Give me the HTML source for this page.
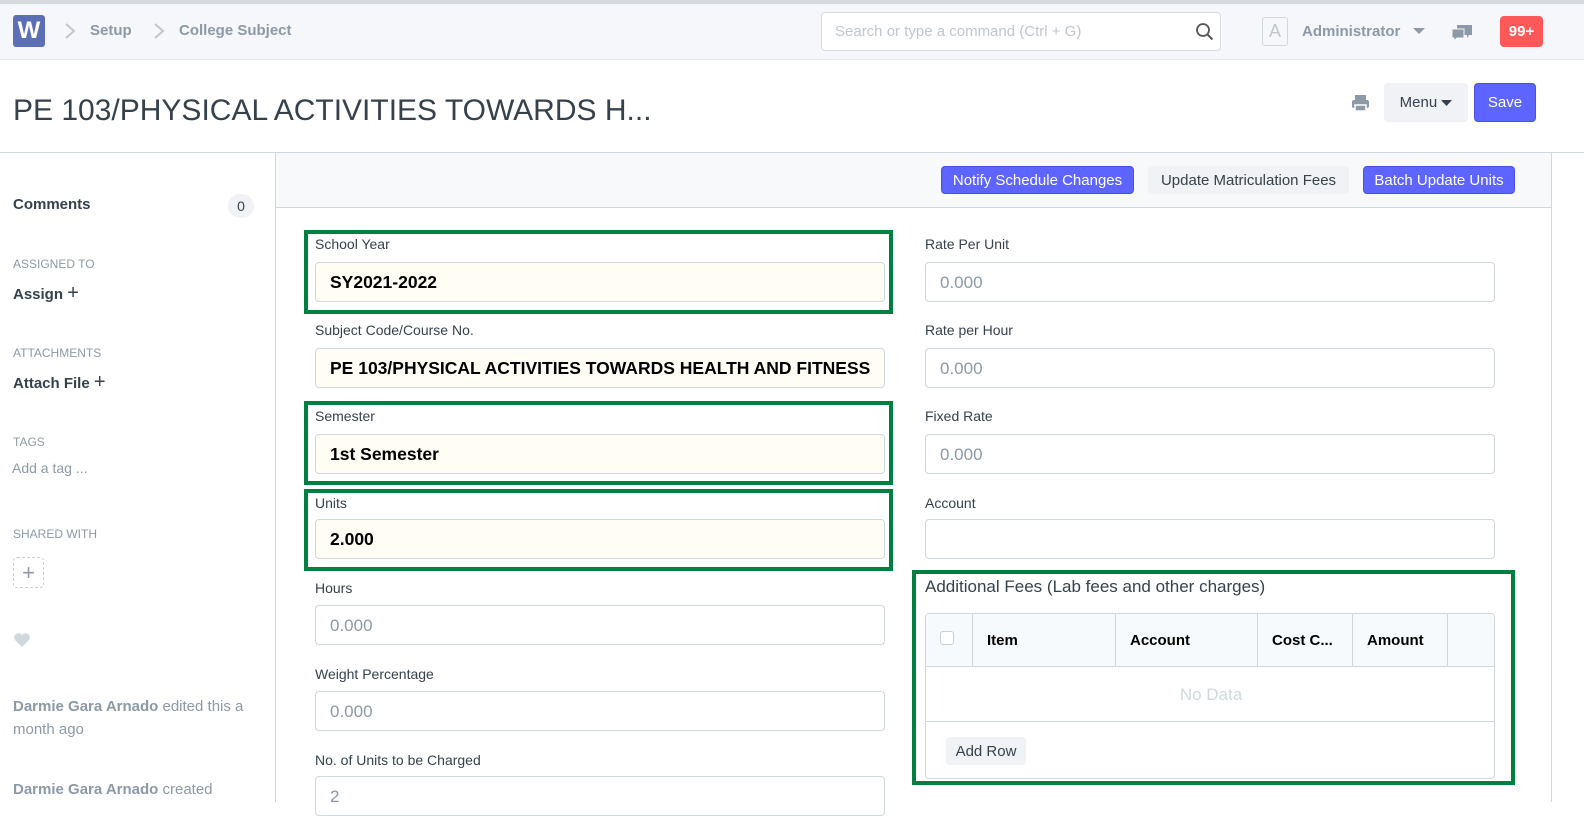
<!DOCTYPE html>
<html><head><meta charset="utf-8">
<style>
*{box-sizing:border-box;margin:0;padding:0}
body{width:1584px;height:802px;overflow:hidden;background:#fff;font-family:"Liberation Sans",sans-serif;color:#1f272e;position:relative}
.a{position:absolute}
.nav{left:0;top:0;width:1584px;height:60px;background:#f5f7fa;border-top:4px solid #d6d9dd;border-bottom:1px solid #e5e8eb}
.crumb{font-size:15px;font-weight:bold;color:#8d99a6}
.lbl{font-size:14px;color:#36414c}
.inp{height:40px;border:1px solid #d1d8dd;border-radius:4px;background:#fff;font-size:17px;color:#8d99a6;padding:10px 14px}
.inp.y{background:#fffdf4;color:#000;font-weight:bold;font-size:17.5px;padding:9px 14px;white-space:nowrap;overflow:hidden}
.gb{border:4px solid #008040}
.side{font-size:12px;color:#8d99a6}
.sb{font-size:15px;font-weight:bold;color:#36414c}
.btn{border-radius:4px;font-size:15px;display:flex;align-items:center;justify-content:center}
.th{font-size:15px;font-weight:bold;color:#000;display:flex;align-items:center;padding-left:14px;border-right:1px solid #d1d8dd;height:52px;top:0}
</style></head><body>
<div class="a nav"></div>
<div class="a" style="left:13px;top:15px;width:32px;height:32px;background:#5c6fb5;border-radius:3px;color:#fff;font-weight:bold;font-size:24px;text-align:center;line-height:32px">W</div>
<svg class="a" style="left:63px;top:22px" width="14" height="18"><path d="M3 2l8 7-8 7" fill="none" stroke="#c0c6cc" stroke-width="2"/></svg>
<div class="a crumb" style="left:90px;top:22px">Setup</div>
<svg class="a" style="left:152px;top:22px" width="14" height="18"><path d="M3 2l8 7-8 7" fill="none" stroke="#c0c6cc" stroke-width="2"/></svg>
<div class="a crumb" style="left:179px;top:22px">College Subject</div>
<div class="a" style="left:821px;top:12px;width:400px;height:39px;border:1px solid #d8dce0;border-radius:4px;background:#fff"></div>
<div class="a" style="left:835px;top:23px;font-size:15px;color:#c0c6cc">Search or type a command (Ctrl + G)</div>
<svg class="a" style="left:1195px;top:22px" width="20" height="20"><circle cx="8" cy="8" r="6" fill="none" stroke="#555" stroke-width="1.8"/><path d="M12.5 12.5l5 5" stroke="#555" stroke-width="2"/></svg>
<div class="a" style="left:1262px;top:17px;width:26px;height:29px;border:1px solid #d1d8dd;border-radius:3px;color:#c0c6cc;font-size:18px;text-align:center;line-height:27px">A</div>
<div class="a" style="left:1302px;top:23px;font-size:15px;font-weight:bold;color:#8d99a6">Administrator</div>
<svg class="a" style="left:1413px;top:28px" width="12" height="7"><path d="M0 0h12L6 6z" fill="#8d99a6"/></svg>
<svg class="a" style="left:1451px;top:23px" width="22" height="20"><path d="M6 2h15v10h-3l-2 3v-3H6z" fill="#8d99a6"/><path d="M1 6h12v9H6l-3 3v-3H1z" fill="#8d99a6" stroke="#f5f7fa" stroke-width="1"/></svg>
<div class="a" style="left:1500px;top:16px;width:43px;height:31px;background:#ff5858;border-radius:4px;color:#fff;font-weight:bold;font-size:15px;text-align:center;line-height:31px">99+</div>

<div class="a" style="left:13px;top:94px;font-size:30px;color:#36414c">PE 103/PHYSICAL ACTIVITIES TOWARDS H...</div>
<svg class="a" style="left:1351px;top:94px" width="19" height="18"><rect x="4" y="1" width="11" height="5" fill="#8d99a6"/><rect x="1" y="6" width="17" height="8" rx="2" fill="#8d99a6"/><rect x="4" y="11" width="11" height="6" fill="#8d99a6" stroke="#fff" stroke-width="1.5"/></svg>
<div class="a btn" style="left:1384px;top:83px;width:84px;height:39px;background:#f0f2f5;color:#36414c">Menu&nbsp;<svg width="11" height="6"><path d="M0 0h11L5.5 6z" fill="#36414c"/></svg></div>
<div class="a btn" style="left:1474px;top:83px;width:62px;height:39px;background:#5e64ff;color:#fff;border:1px solid #4b51e0">Save</div>

<div class="a" style="left:0;top:152px;width:1584px;height:1px;background:#d1d8dd"></div>
<div class="a" style="left:275px;top:153px;width:1px;height:649px;background:#d1d8dd"></div>
<div class="a" style="left:1551px;top:153px;width:1px;height:649px;background:#d1d8dd"></div>
<div class="a" style="left:276px;top:153px;width:1275px;height:55px;background:#f8f9fb;border-bottom:1px solid #d1d8dd"></div>
<div class="a btn" style="left:941px;top:166px;width:193px;height:28px;background:#5e64ff;color:#fff;border:1px solid #4b51e0">Notify Schedule Changes</div>
<div class="a btn" style="left:1148px;top:166px;width:201px;height:28px;background:#f0f2f5;color:#36414c">Update Matriculation Fees</div>
<div class="a btn" style="left:1363px;top:166px;width:152px;height:28px;background:#5e64ff;color:#fff;border:1px solid #4b51e0">Batch Update Units</div>

<div class="a sb" style="left:13px;top:196px">Comments</div>
<div class="a" style="left:228px;top:194px;width:26px;height:24px;border-radius:12px;background:#f0f2f5;font-size:14px;color:#36414c;text-align:center;line-height:24px">0</div>
<div class="a side" style="left:13px;top:257px">ASSIGNED TO</div>
<div class="a sb" style="left:13px;top:286px">Assign <span style="font-weight:normal;font-size:20px;line-height:10px">+</span></div>
<div class="a side" style="left:13px;top:346px">ATTACHMENTS</div>
<div class="a sb" style="left:13px;top:375px">Attach File <span style="font-weight:normal;font-size:20px;line-height:10px">+</span></div>
<div class="a side" style="left:13px;top:435px">TAGS</div>
<div class="a" style="left:12px;top:460px;font-size:14px;color:#8d99a6">Add a tag ...</div>
<div class="a side" style="left:13px;top:527px">SHARED WITH</div>
<div class="a" style="left:13px;top:557px;width:31px;height:31px;border:1px dashed #c8cfd5;border-radius:4px;color:#8d99a6;font-size:22px;text-align:center;line-height:29px">+</div>
<svg class="a" style="left:13px;top:632px" width="18" height="16"><path d="M9 15L2 8a4 4 0 0 1 7-5 4 4 0 0 1 7 5z" fill="#d1d8dd"/></svg>
<div class="a" style="left:13px;top:695px;width:236px;font-size:15px;color:#8d99a6;line-height:23px"><b>Darmie Gara Arnado</b> edited this a month ago</div>
<div class="a" style="left:13px;top:778px;width:250px;font-size:15px;color:#8d99a6;line-height:23px"><b>Darmie Gara Arnado</b> created</div>

<div class="a gb" style="left:304px;top:230px;width:589px;height:84px"></div>
<div class="a lbl" style="left:315px;top:236px">School Year</div>
<div class="a inp y" style="left:315px;top:262px;width:570px">SY2021-2022</div>
<div class="a lbl" style="left:315px;top:322px">Subject Code/Course No.</div>
<div class="a inp y" style="left:315px;top:348px;width:570px">PE 103/PHYSICAL ACTIVITIES TOWARDS HEALTH AND FITNESS</div>
<div class="a gb" style="left:304px;top:401px;width:589px;height:84px"></div>
<div class="a lbl" style="left:315px;top:408px">Semester</div>
<div class="a inp y" style="left:315px;top:434px;width:570px">1st Semester</div>
<div class="a gb" style="left:304px;top:489px;width:589px;height:82px"></div>
<div class="a lbl" style="left:315px;top:495px">Units</div>
<div class="a inp y" style="left:315px;top:519px;width:570px">2.000</div>
<div class="a lbl" style="left:315px;top:580px">Hours</div>
<div class="a inp" style="left:315px;top:605px;width:570px">0.000</div>
<div class="a lbl" style="left:315px;top:666px">Weight Percentage</div>
<div class="a inp" style="left:315px;top:691px;width:570px">0.000</div>
<div class="a lbl" style="left:315px;top:752px">No. of Units to be Charged</div>
<div class="a inp" style="left:315px;top:776px;width:570px">2</div>

<div class="a lbl" style="left:925px;top:236px">Rate Per Unit</div>
<div class="a inp" style="left:925px;top:262px;width:570px">0.000</div>
<div class="a lbl" style="left:925px;top:322px">Rate per Hour</div>
<div class="a inp" style="left:925px;top:348px;width:570px">0.000</div>
<div class="a lbl" style="left:925px;top:408px">Fixed Rate</div>
<div class="a inp" style="left:925px;top:434px;width:570px">0.000</div>
<div class="a lbl" style="left:925px;top:495px">Account</div>
<div class="a inp" style="left:925px;top:519px;width:570px"></div>

<div class="a gb" style="left:912px;top:570px;width:603px;height:215px"></div>
<div class="a" style="left:925px;top:577px;font-size:17px;color:#36414c">Additional Fees (Lab fees and other charges)</div>
<div class="a" style="left:925px;top:613px;width:570px;height:166px;border:1px solid #d1d8dd;border-radius:4px;overflow:hidden">
 <div class="a" style="left:0;top:0;width:570px;height:53px;background:#f7fafc;border-bottom:1px solid #d1d8dd"></div>
 <div class="a" style="left:0;top:0;width:47px;height:52px;border-right:1px solid #d1d8dd"><div style="margin:17px 0 0 14px;width:14px;height:14px;border:1px solid #c8cfd5;border-radius:3px;background:#fff"></div></div>
 <div class="a th" style="left:47px;width:143px">Item</div>
 <div class="a th" style="left:190px;width:142px">Account</div>
 <div class="a th" style="left:332px;width:95px">Cost C...</div>
 <div class="a th" style="left:427px;width:95px">Amount</div>
 <div class="a" style="left:0;top:53px;width:570px;height:55px;border-bottom:1px solid #d1d8dd;text-align:center;line-height:55px;font-size:17px;color:#d1d8dd">No Data</div>
 <div class="a btn" style="left:20px;top:123px;width:80px;height:28px;background:#f0f2f5;color:#36414c">Add Row</div>
</div>
</body></html>
